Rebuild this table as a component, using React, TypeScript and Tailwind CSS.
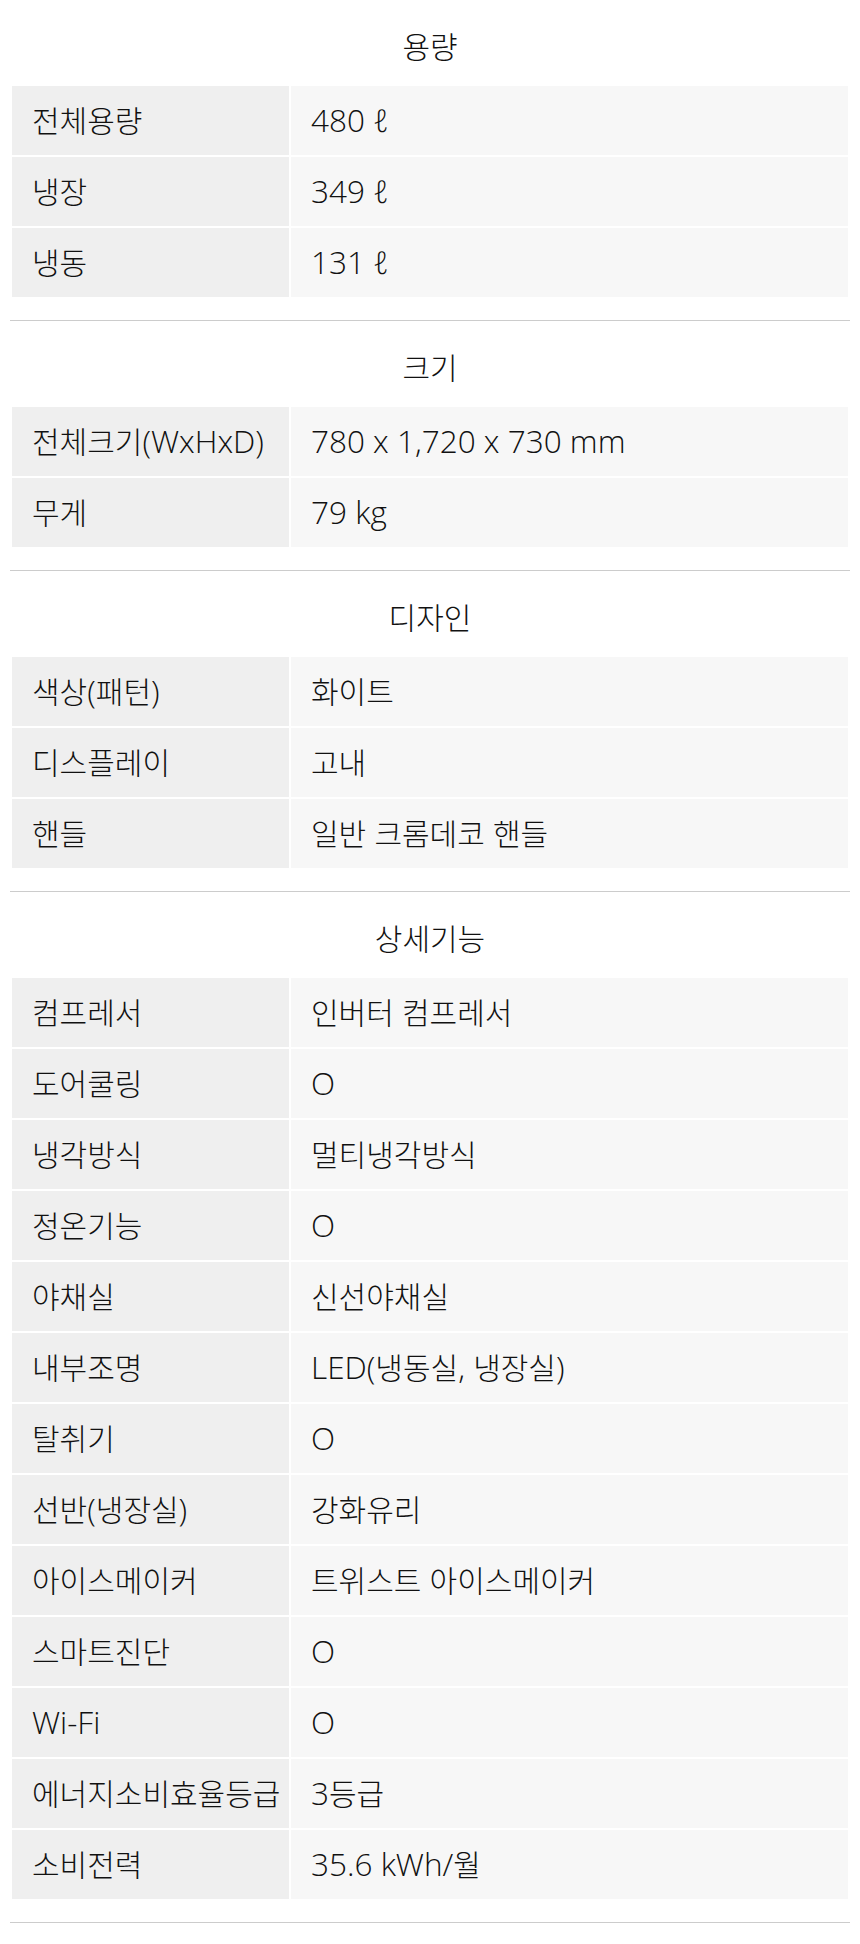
import React from "react";

interface SpecSection {
  title: string;
  rows: [string, string][];
}

const SPECS: SpecSection[] = [
  {
    title: "용량",
    rows: [
      ["전체용량", "480 ℓ"],
      ["냉장", "349 ℓ"],
      ["냉동", "131 ℓ"],
    ],
  },
  {
    title: "크기",
    rows: [
      ["전체크기(WxHxD)", "780 x 1,720 x 730 mm"],
      ["무게", "79 kg"],
    ],
  },
  {
    title: "디자인",
    rows: [
      ["색상(패턴)", "화이트"],
      ["디스플레이", "고내"],
      ["핸들", "일반 크롬데코 핸들"],
    ],
  },
  {
    title: "상세기능",
    rows: [
      ["컴프레서", "인버터 컴프레서"],
      ["도어쿨링", "O"],
      ["냉각방식", "멀티냉각방식"],
      ["정온기능", "O"],
      ["야채실", "신선야채실"],
      ["내부조명", "LED(냉동실, 냉장실)"],
      ["탈취기", "O"],
      ["선반(냉장실)", "강화유리"],
      ["아이스메이커", "트위스트 아이스메이커"],
      ["스마트진단", "O"],
      ["Wi-Fi", "O"],
      ["에너지소비효율등급", "3등급"],
      ["소비전력", "35.6 kWh/월"],
    ],
  },
];

const HANGUL = /([\u1100-\u11ff\u3130-\u318f\uac00-\ud7a3]+)/;

// hangul and latin are sized apart so the latin runs keep the wider look of the original
function MixedText({ text }: { text: string }) {
  const parts = text.split(HANGUL).filter(Boolean);
  return (
    <>
      {parts.map((p, i) =>
        HANGUL.test(p) ? (
          <span key={i} className="text-[30px] font-light">{p}</span>
        ) : (
          <span key={i} className="text-[31.5px] font-light">{p}</span>
        )
      )}
    </>
  );
}

function Section({ section }: { section: SpecSection }) {
  return (
    <section className="mx-[10px] border-b border-[#cccccc] pb-[21px]">
      <h3 className="pt-[30px] pb-[20px] text-center text-[30px] leading-[34px] font-normal text-[#111111]">
        <MixedText text={section.title} />
      </h3>
      <table className="w-full border-separate border-spacing-[2px]">
        <tbody>
          {section.rows.map(([label, value]) => (
            <tr key={label}>
              <td className="h-[69px] w-[277px] bg-[#efefef] pl-[20px] align-middle text-[30px] leading-[34px] whitespace-nowrap text-[#111111]">
                <MixedText text={label} />
              </td>
              <td className="h-[69px] bg-[#f7f7f7] pl-[20px] align-middle text-[30px] leading-[34px] whitespace-nowrap text-[#111111]">
                <MixedText text={value} />
              </td>
            </tr>
          ))}
        </tbody>
      </table>
    </section>
  );
}

export default function App() {
  return (
    <div className="min-h-[1944px] w-[860px] bg-white font-['Open_Sans','Noto_Sans_CJK_KR',sans-serif]">
      {SPECS.map((s) => (
        <Section key={s.title} section={s} />
      ))}
    </div>
  );
}
